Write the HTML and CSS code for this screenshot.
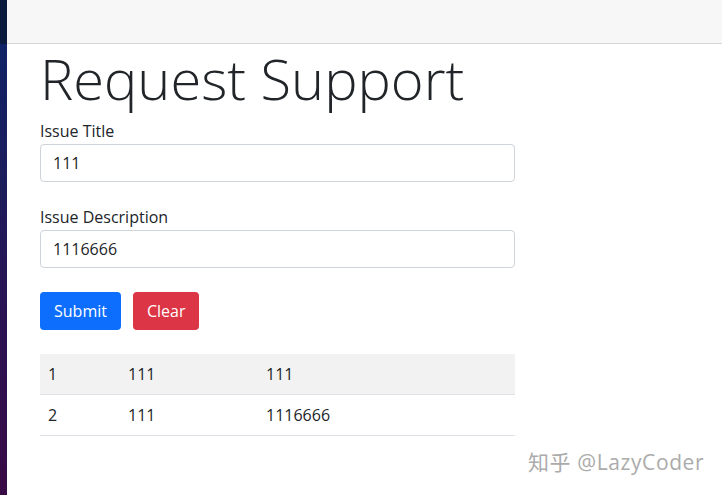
FILE: index.html
```html
<!DOCTYPE html>
<html lang="en">
<head>
<meta charset="utf-8">
<title>Request Support</title>
<link rel="stylesheet" href="styles.css">
</head>
<body>
<div class="app">
  <aside class="sidebar">
    <div class="sidebar-top"></div>
  </aside>
  <div class="main">
    <header class="topbar"></header>
    <main class="content">
      <h1 class="title">Request Support</h1>
      <form class="form">
        <div class="field">
          <label class="label" for="t">Issue Title</label>
          <input class="input" id="t" type="text" value="111">
        </div>
        <div class="field field-next">
          <label class="label" for="d">Issue Description</label>
          <input class="input" id="d" type="text" value="1116666">
        </div>
        <div class="actions">
          <button type="button" class="btn btn-primary">Submit</button>
          <button type="button" class="btn btn-danger">Clear</button>
        </div>
      </form>
      <table class="table">
        <tbody>
          <tr class="row-striped"><td class="c1">1</td><td class="c2">111</td><td>111</td></tr>
          <tr><td class="c1">2</td><td class="c2">111</td><td>1116666</td></tr>
        </tbody>
      </table>
    </main>
  </div>
</div>
<div class="watermark">知乎 @LazyCoder</div>
</body>
</html>
```
FILE: styles.css
```css
html, body {
  margin: 0;
  padding: 0;
  height: 100%;
  background: #fff;
}
body {
  font-family: "Open Sans", "Noto Sans CJK SC", sans-serif;
  color: #212529;
  font-size: 16px;
  overflow: hidden;
}
.app {
  display: flex;
  height: 495px;
}
.sidebar {
  width: 7px;
  flex: none;
  background: linear-gradient(180deg, #0b236a 0%, #1b1d5c 35%, #2b1253 65%, #3a0a45 100%);
  display: flex;
  flex-direction: column;
}
.sidebar-top {
  height: 44px;
  background: #0a1a3c;
}
.main {
  flex: 1;
  display: flex;
  flex-direction: column;
}
.topbar {
  height: 43px;
  background: #f7f7f7;
  border-bottom: 1px solid #d6d6d6;
}
.content {
  padding-left: 33px;
  width: 475px;
}
.title {
  font-family: "Open Sans", sans-serif;
  font-weight: 300;
  font-size: 56px;
  line-height: 1.2;
  margin: 1px 0 7px 0;
  color: #212529;
}
.form {
  display: flex;
  flex-direction: column;
}
.field {
  display: flex;
  flex-direction: column;
}
.field-next {
  margin-top: 23px;
}
.label {
  font-size: 16px;
  line-height: 24px;
  margin-bottom: 1px;
}
.input {
  box-sizing: border-box;
  height: 38px;
  width: 475px;
  border: 1px solid #ced4da;
  border-radius: 4px;
  padding: 6px 12px;
  font-family: inherit;
  font-size: 16px;
  color: #212529;
  background: #fff;
}
.actions {
  display: flex;
  gap: 12px;
  margin-top: 24px;
}
.btn {
  height: 38px;
  padding: 6px 14px;
  border: none;
  border-radius: 4px;
  font-family: inherit;
  font-size: 16px;
  color: #fff;
}
.btn-primary { background: #0d6efd; }
.btn-danger { background: #dc3545; }
.table {
  margin-top: 24px;
  width: 475px;
  border-collapse: collapse;
}
.table td {
  padding: 8px;
  height: 24px;
  line-height: 24px;
  border-bottom: 1px solid #dee2e6;
  color: #212529;
}
.row-striped td { background: #f2f2f2; }
.c1 { width: 64px; }
.c2 { width: 122px; }
.watermark {
  position: absolute;
  left: 528px;
  top: 446px;
  font-size: 21px;
  color: #ababab;
  text-shadow: 0 0 2px #fff;
  letter-spacing: 0.6px;
}
```
